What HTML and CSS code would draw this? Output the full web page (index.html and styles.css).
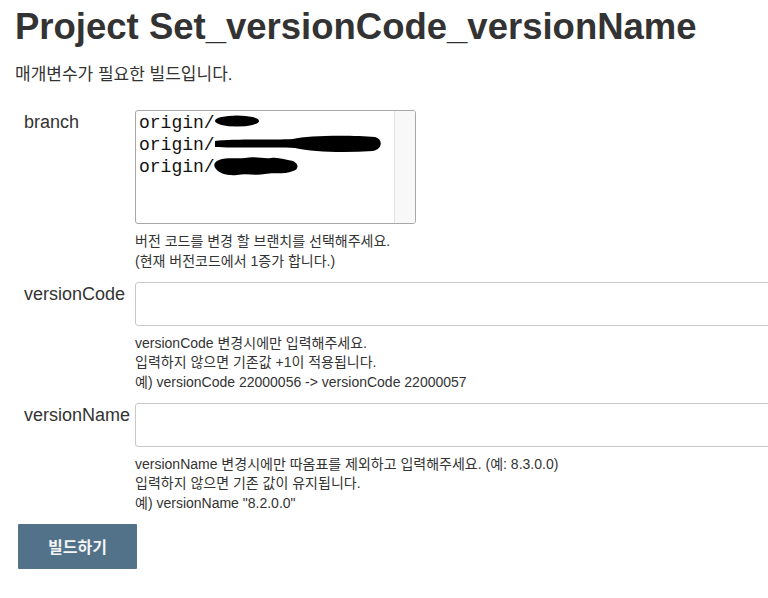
FILE: index.html
```html
<!DOCTYPE html>
<html lang="ko">
<head>
<meta charset="utf-8">
<title>Project Set_versionCode_versionName</title>
<link rel="stylesheet" href="styles.css">
</head>
<body>
<main class="page">
  <h1 class="title">Project Set_versionCode_versionName</h1>
  <p class="desc">매개변수가 필요한 빌드입니다.</p>
  <form class="form">
    <div class="row">
      <div class="label">branch</div>
      <div class="field">
        <div class="listbox">
          <div class="options">
            <div class="opt">origin/<svg class="blot b1" width="46" height="14" viewBox="0 0 46 14"><ellipse cx="23" cy="7" rx="22" ry="5.5" fill="#000"/></svg></div>
            <div class="opt">origin/<svg class="blot b2" width="170" height="20" viewBox="0 0 170 20"><path d="M2 7 C20 5 60 6 80 5 C95 1 140 1 162 3 C170 5 170 15 160 17 C130 19 100 18 82 14 C60 13 20 14 2 13 Z" fill="#000"/></svg></div>
            <div class="opt">origin/<svg class="blot b3" width="86" height="20" viewBox="0 0 86 20"><path d="M6 4 C14 1 24 3 32 2 C42 0 50 3 58 2 C66 1 72 4 80 5 C86 8 86 13 80 15 C70 19 60 16 52 18 C42 20 34 17 24 19 C14 20 6 17 3 13 C0 9 1 6 6 4 Z" fill="#000"/></svg></div>
          </div>
          <div class="track"></div>
        </div>
        <div class="help">버전 코드를 변경 할 브랜치를 선택해주세요.<br>(현재 버전코드에서 1증가 합니다.)</div>
      </div>
    </div>
    <div class="row">
      <div class="label">versionCode</div>
      <div class="field">
        <input class="input" type="text" name="versionCode">
        <div class="help">versionCode 변경시에만 입력해주세요.<br>입력하지 않으면 기존값 +1이 적용됩니다.<br>예) versionCode 22000056 -&gt; versionCode 22000057</div>
      </div>
    </div>
    <div class="row">
      <div class="label">versionName</div>
      <div class="field">
        <input class="input" type="text" name="versionName">
        <div class="help">versionName 변경시에만 따옴표를 제외하고 입력해주세요. (예: 8.3.0.0)<br>입력하지 않으면 기존 값이 유지됩니다.<br>예) versionName "8.2.0.0"</div>
      </div>
    </div>
    <button class="build" type="button">빌드하기</button>
  </form>
</main>
</body>
</html>
```
FILE: styles.css
```css
html {
  overflow: hidden;
  background: #fff;
}
body {
  margin: 0;
  font-family: "Liberation Sans", "Noto Sans CJK KR", sans-serif;
  color: #333;
}
.page {
  padding-left: 15px;
}
.title {
  margin: 0;
  padding-top: 5px;
  font-size: 36.5px;
  font-weight: 700;
  line-height: 44px;
  color: #333;
  white-space: nowrap;
}
.desc {
  margin: 14px 0 0;
  font-size: 17px;
  line-height: 24px;
}
.form {
  margin-top: 23px;
}
.row {
  display: grid;
  grid-template-columns: 120px 1fr;
  margin-bottom: 10.5px;
}
.label {
  padding: 1px 0 0 9px;
  font-size: 18px;
  line-height: 22px;
  white-space: nowrap;
}
.listbox {
  display: flex;
  width: 281px;
  height: 114px;
  box-sizing: border-box;
  border: 1px solid #a8a8a8;
  border-radius: 3px;
  background: #fff;
  overflow: hidden;
}
.options {
  flex: 1;
  padding: 1px 0 0 3px;
  font-family: "Liberation Mono", monospace;
  font-size: 18px;
  line-height: 22px;
  color: #111;
  white-space: nowrap;
}
.blot {
  vertical-align: middle;
}
.b1 { margin: -4px 0 0 -1px; }
.b2 { margin: -3px 0 0 -2px; }
.b3 { margin: -2px 0 0 -2px; }
.track {
  width: 20px;
  border-left: 1px solid #e4e4e4;
  background: #f8f8f8;
}
.input {
  display: block;
  width: 660px;
  height: 44px;
  box-sizing: border-box;
  margin: 0;
  border: 1px solid #c8c8c8;
  border-radius: 3px;
  background: #fff;
}
.help {
  margin-top: 8px;
  font-size: 14px;
  line-height: 19.5px;
  color: #333;
  white-space: nowrap;
}
.build {
  display: block;
  margin: 8px 0 0 3px;
  width: 119px;
  height: 45px;
  border: 0;
  border-radius: 1px;
  background: #52728a;
  color: #f4f4f4;
  font-family: "Noto Sans CJK KR", sans-serif;
  font-size: 16px;
  font-weight: 700;
}
```
